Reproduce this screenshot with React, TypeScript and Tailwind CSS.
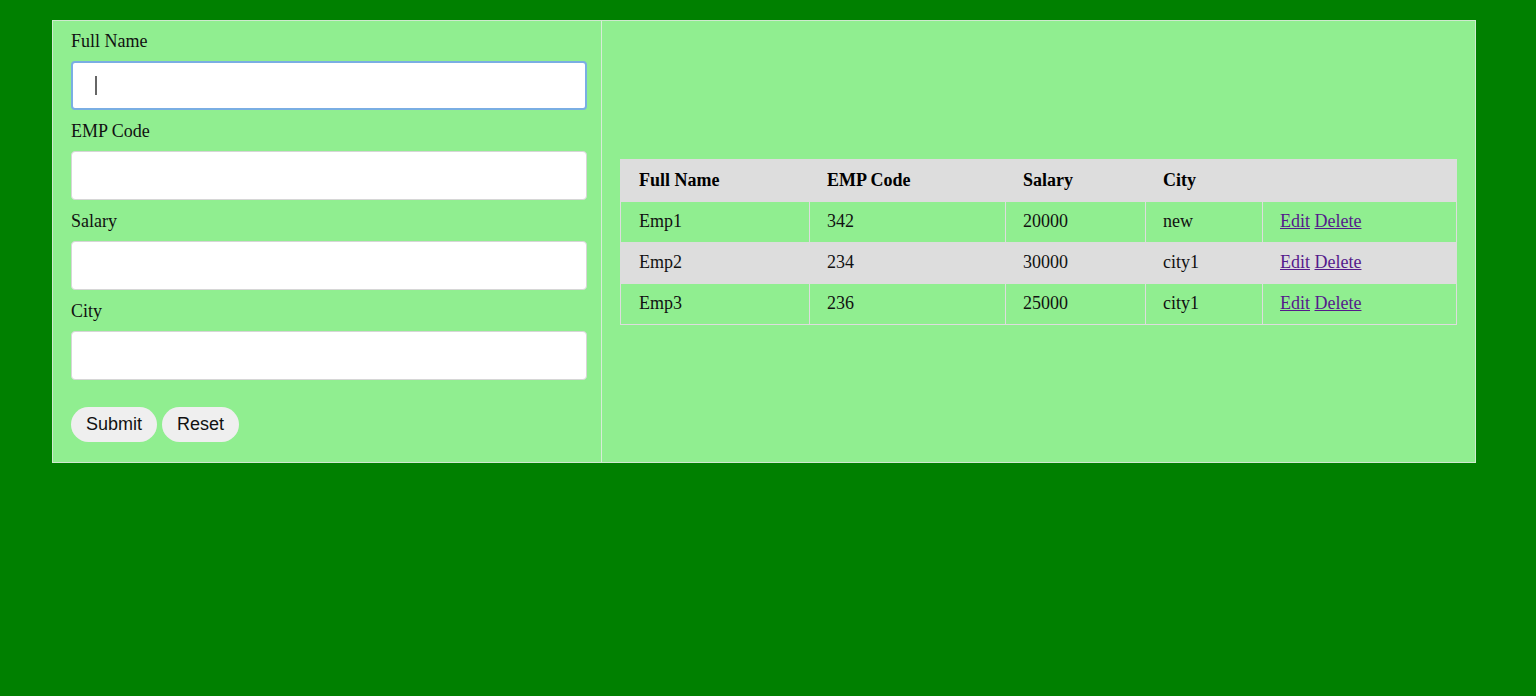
import React from 'react'

interface Employee {
  fullName: string
  empCode: string
  salary: string
  city: string
}

const employees: Employee[] = [
  { fullName: 'Emp1', empCode: '342', salary: '20000', city: 'new' },
  { fullName: 'Emp2', empCode: '234', salary: '30000', city: 'city1' },
  { fullName: 'Emp3', empCode: '236', salary: '25000', city: 'city1' },
]

const serif = "font-['Liberation_Serif','Times_New_Roman',serif]"

function Field({ label, focused, first }: { label: string; focused?: boolean; first?: boolean }) {
  return (
    <div className="flex flex-col">
      <label className={`${first ? 'mt-[10px]' : 'mt-[11px]'} mb-[9px] text-[18px] leading-[21px] text-[#111]`}>
        {label}
      </label>
      <div className="relative">
        <input
          type="text"
          className={`h-[49px] w-full rounded-[4px] bg-white pl-[24px] outline-none ${
            focused ? 'border-2 border-[#7aaee3]' : 'border border-[#d6d6d6]'
          }`}
        />
        {focused && <div className="absolute left-[24px] top-[15px] h-[19px] w-[2px] bg-[#666]" />}
      </div>
    </div>
  )
}

export default function App() {
  return (
    <div className={`min-h-[696px] bg-[#008000] pt-[20px] ${serif}`}>
      <div className="ml-[52px] flex w-[1424px] border border-[#cfe9cf] bg-[#90ee90]">
        {/* Form */}
        <div className="w-[549px] shrink-0 border-r border-[#d6ecd6] pb-[20px] pl-[18px] pr-[14px]">
          <Field label="Full Name" focused first />
          <Field label="EMP Code" />
          <Field label="Salary" />
          <Field label="City" />
          <div className="mt-[27px] flex gap-[5px] font-['Liberation_Sans',Arial,sans-serif] text-[18px] text-[#111]">
            <button className="h-[35px] rounded-full bg-[#efefef] px-[15px]">Submit</button>
            <button className="h-[35px] rounded-full bg-[#efefef] px-[15px]">Reset</button>
          </div>
        </div>

        {/* List */}
        <div className="flex flex-1 items-center px-[18px]">
          <table className="w-[836px] table-fixed border-collapse text-[18px] text-[#111]">
            <colgroup>
              <col className="w-[189px]" />
              <col className="w-[196px]" />
              <col className="w-[140px]" />
              <col className="w-[117px]" />
              <col className="w-[194px]" />
            </colgroup>
            <thead>
              <tr className="h-[42px] bg-[#dddddd]">
                <th className="border border-[#dddddd] px-[18px] text-left font-bold text-black">Full Name</th>
                <th className="border border-[#dddddd] px-[17px] text-left font-bold text-black">EMP Code</th>
                <th className="border border-[#dddddd] px-[17px] text-left font-bold text-black">Salary</th>
                <th className="border border-[#dddddd] px-[17px] text-left font-bold text-black">City</th>
                <th className="border border-[#dddddd] px-[17px]"></th>
              </tr>
            </thead>
            <tbody>
              {employees.map((e, i) => (
                <tr key={e.empCode} className={`h-[41px] ${i % 2 === 1 ? 'bg-[#dddddd]' : ''}`}>
                  <td className="border border-[#dddddd] px-[18px]">{e.fullName}</td>
                  <td className="border border-[#dddddd] px-[17px]">{e.empCode}</td>
                  <td className="border border-[#dddddd] px-[17px]">{e.salary}</td>
                  <td className="border border-[#dddddd] px-[17px]">{e.city}</td>
                  <td className="border border-[#dddddd] px-[17px]">
                    <a href="#" className="text-[#551a8b] underline">Edit</a>{' '}
                    <a href="#" className="text-[#551a8b] underline">Delete</a>
                  </td>
                </tr>
              ))}
            </tbody>
          </table>
        </div>
      </div>
    </div>
  )
}
